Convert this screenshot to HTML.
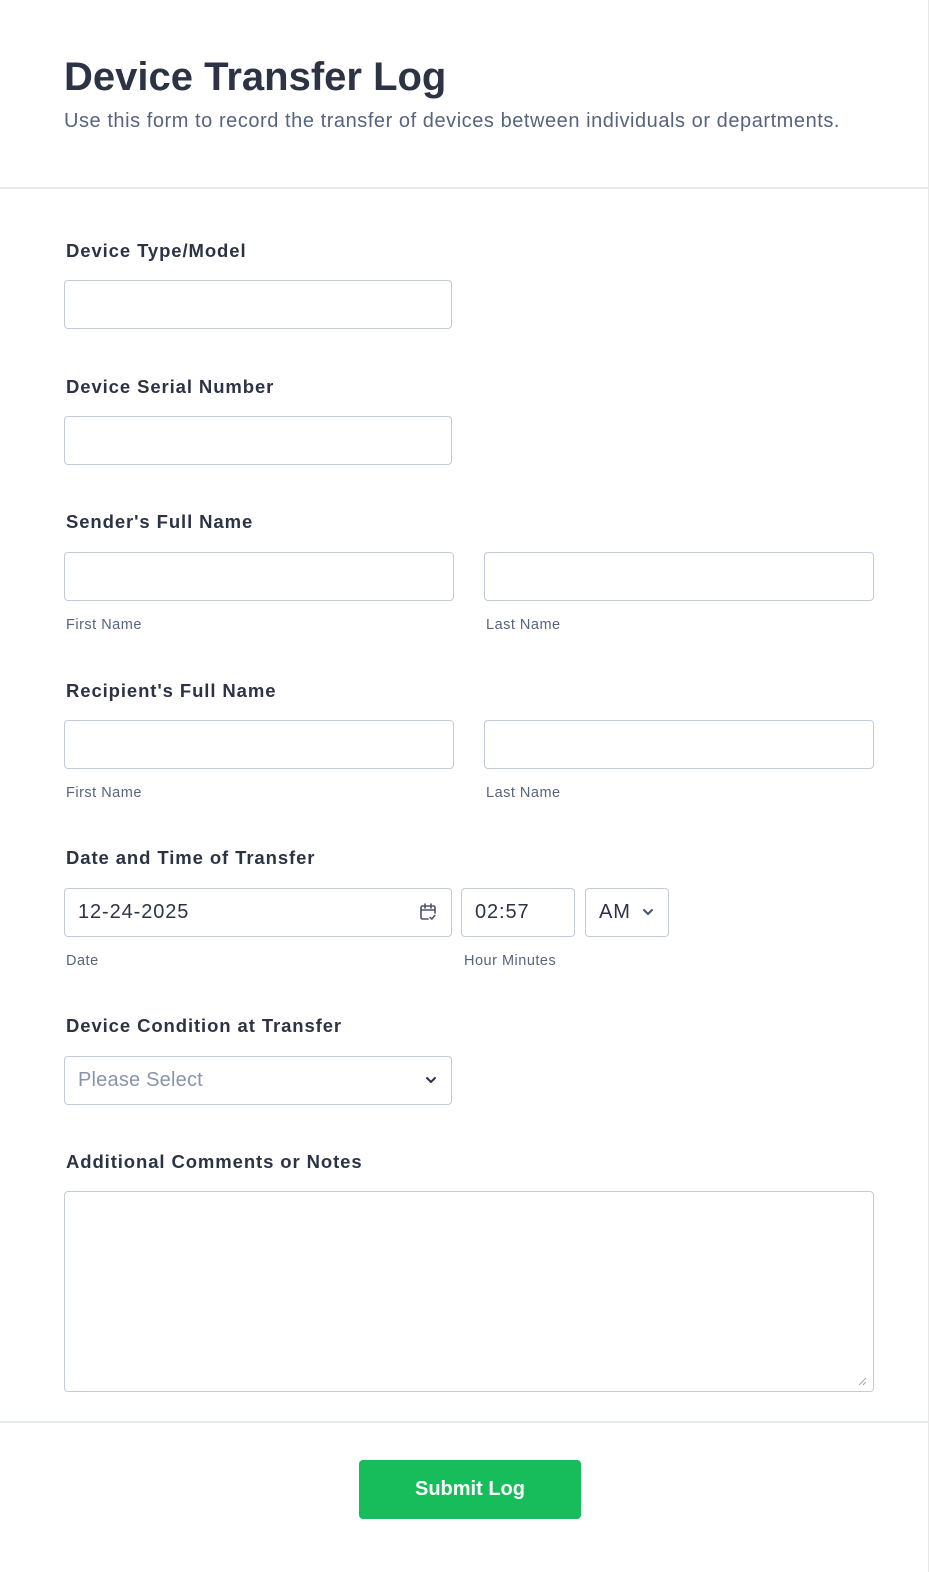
<!DOCTYPE html>
<html><head><meta charset="utf-8"><style>
*{box-sizing:border-box;margin:0;padding:0}
body{width:930px;height:1572px;background:#fff;font-family:"Liberation Sans",sans-serif;position:relative;overflow:hidden;color:#2c3345}
.a{position:absolute}
.page{position:absolute;left:0;top:0;width:929px;height:1572px;border-right:1px solid #e8eaf0}
h1{position:absolute;left:64px;top:55px;font-size:40px;font-weight:bold;color:#2c3345;letter-spacing:0px}
.sub{left:64px;top:110px;font-size:20px;color:#57647e;letter-spacing:0.55px}
.hr{left:0;width:929px;height:2px;background:#e6e8ef}
.lbl{left:66px;font-size:18.5px;font-weight:bold;color:#2c3345;line-height:22px;letter-spacing:0.9px}
.in{border:1px solid #c3cad8;border-radius:4px;height:49px;background:#fff}
.sl{font-size:14.5px;color:#57647e;line-height:18px;letter-spacing:0.5px}
.val{font-size:20px;color:#2c3345;line-height:47px;padding-left:13px;letter-spacing:0.9px}
</style></head><body>
<div class="page"></div>
<h1>Device Transfer Log</h1>
<div class="a sub">Use this form to record the transfer of devices between individuals or departments.</div>
<div class="a hr" style="top:187px"></div>

<div class="a lbl" style="top:240px">Device Type/Model</div>
<div class="a in" style="left:64px;top:280px;width:388px"></div>

<div class="a lbl" style="top:376px">Device Serial Number</div>
<div class="a in" style="left:64px;top:416px;width:388px"></div>

<div class="a lbl" style="top:511px">Sender's Full Name</div>
<div class="a in" style="left:64px;top:552px;width:390px"></div>
<div class="a in" style="left:484px;top:552px;width:390px"></div>
<div class="a sl" style="left:66px;top:616px">First Name</div>
<div class="a sl" style="left:486px;top:616px">Last Name</div>

<div class="a lbl" style="top:680px">Recipient's Full Name</div>
<div class="a in" style="left:64px;top:720px;width:390px"></div>
<div class="a in" style="left:484px;top:720px;width:390px"></div>
<div class="a sl" style="left:66px;top:784px">First Name</div>
<div class="a sl" style="left:486px;top:784px">Last Name</div>

<div class="a lbl" style="top:847px">Date and Time of Transfer</div>
<div class="a in val" style="left:64px;top:888px;width:388px">12-24-2025</div>
<svg class="a" style="left:418px;top:902px" width="20" height="20" viewBox="0 0 20 20" fill="none" stroke="#4a5468" stroke-width="1.6" stroke-linecap="round" stroke-linejoin="round"><path d="M10 17H4.5A1.5 1.5 0 0 1 3 15.5v-10A1.5 1.5 0 0 1 4.5 4h11A1.5 1.5 0 0 1 17 5.5V11M3 8h14M7 2v4M13 2v4M12 15.5l1.8 1.5 3-3.5"/></svg>
<div class="a in val" style="left:461px;top:888px;width:114px">02:57</div>
<div class="a in val" style="left:585px;top:888px;width:84px">AM</div>
<svg class="a" style="left:641px;top:906px" width="14" height="12" viewBox="0 0 14 12" fill="none" stroke="#4a5468" stroke-width="2" stroke-linecap="round" stroke-linejoin="round"><path d="M3 4l4 4 4-4"/></svg>
<div class="a sl" style="left:66px;top:952px">Date</div>
<div class="a sl" style="left:464px;top:952px">Hour Minutes</div>

<div class="a lbl" style="top:1015px">Device Condition at Transfer</div>
<div class="a in val" style="left:64px;top:1056px;width:388px;color:#8894ab;letter-spacing:0.2px">Please Select</div>
<svg class="a" style="left:424px;top:1074px" width="14" height="12" viewBox="0 0 14 12" fill="none" stroke="#2c3345" stroke-width="2" stroke-linecap="round" stroke-linejoin="round"><path d="M3 4l4 4 4-4"/></svg>

<div class="a lbl" style="top:1151px">Additional Comments or Notes</div>
<div class="a in" style="left:64px;top:1191px;width:810px;height:201px"></div>
<svg class="a" style="left:856px;top:1375px" width="12" height="12" viewBox="0 0 12 12" stroke="#a0a8b8" stroke-width="1"><path d="M10 3L3 10M10 7L7 10"/></svg>

<div class="a hr" style="top:1421px"></div>
<div class="a" style="left:359px;top:1460px;width:222px;height:59px;background:#18bd5b;border-radius:4px;color:#fff;font-size:20px;font-weight:bold;text-align:center;line-height:59px">Submit Log</div>
</body></html>
